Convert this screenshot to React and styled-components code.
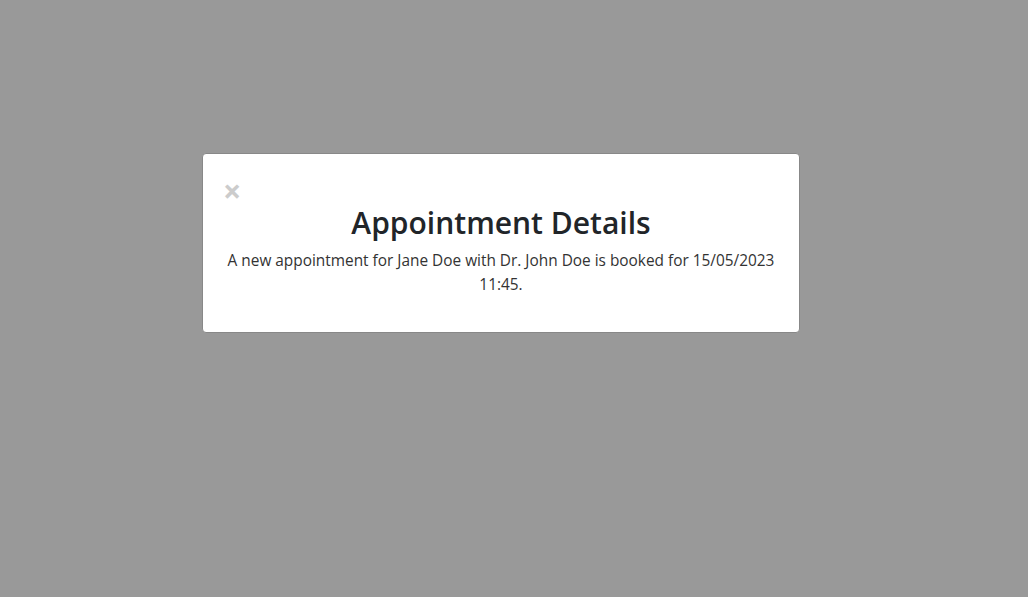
import React from 'react';
import styled, { createGlobalStyle } from 'styled-components';

const GlobalStyle = createGlobalStyle`
    html, body {
        margin: 0;
        padding: 0;
        height: 100%;
    }
    body {
        font-family: "Open Sans", "Noto Sans", sans-serif;
        color: #212529;
    }
`;

const Overlay = styled.div`
    width: 100%;
    height: 597px;
    background-color: #999999;
    padding-top: 153px;
    padding-left: 202px;
    box-sizing: border-box;
`;

const Modal = styled.div`
    width: 598px;
    box-sizing: border-box;
    background-color: #ffffff;
    border: 1px solid #888888;
    border-radius: 4px;
    padding: 21px 20px 35px 20px;
    display: flex;
    flex-direction: column;
`;

const Close = styled.span`
    align-self: flex-start;
    color: #cccccc;
    font-size: 32px;
    font-weight: bold;
    line-height: 28px;
    margin-top: 2px;
    cursor: pointer;
`;

const Title = styled.h2`
    margin: 0;
    text-align: center;
    font-size: 30px;
    font-weight: 600;
    line-height: 36px;
    color: #212529;
`;

const Text = styled.p`
    margin: 8px 0 0 0;
    text-align: center;
    font-size: 15.4px;
    line-height: 24px;
    color: #333333;
`;

export default function App() {
    return (
        <>
            <GlobalStyle />
            <Overlay>
                <Modal>
                    <Close>&times;</Close>
                    <Title>Appointment Details</Title>
                    <Text>
                        A new appointment for Jane Doe with Dr. John Doe is booked for 15/05/2023 11:45.
                    </Text>
                </Modal>
            </Overlay>
        </>
    );
}
